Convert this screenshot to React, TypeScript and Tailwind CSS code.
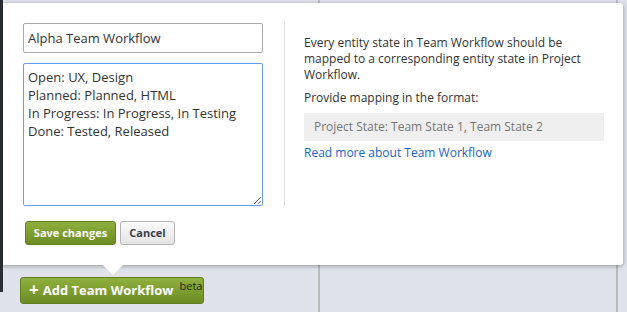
export default function App() {
  return (
    <div
      className="relative w-[627px] h-[312px] overflow-hidden bg-[#dfe2ea] flex"
      style={{ fontFamily: '"Open Sans", "Liberation Sans", sans-serif' }}
    >
      {/* board columns behind the popover */}
      <div className="w-[3px] h-[292px] bg-[#2b2e35]" />
      <div className="w-[315px] h-full flex flex-col justify-end pl-[17px] pb-[8px]">
        <button className="w-[184px] h-[27px] flex items-center whitespace-nowrap pl-[8px] rounded-[3px] border border-[#5f7e1f] bg-gradient-to-b from-[#8fb03d] to-[#6d8c25] text-white font-bold text-[13px] leading-none">
          <span className="text-[17px] mr-[4px] -mt-[2px]">+</span>
          <span>Add Team Workflow</span>
          <span className="ml-[6px] -mt-[10px] text-[11px] font-normal text-[#1f2a0a]">beta</span>
        </button>
      </div>
      <div className="w-[2px] h-full bg-[#b9babd]" />
      <div className="w-[296px] h-full" />
      <div className="w-[2px] h-full bg-[#b9babd]" />

      {/* popover */}
      <div className="absolute left-[3px] top-[3px] w-[620px] h-[262px] bg-white rounded-tr-[3px] rounded-br-[3px] shadow-[0_1px_4px_rgba(0,0,0,0.35)] flex pt-[20px] pl-[20px]">
        <div className="w-[240px] flex flex-col">
          <input
            defaultValue="Alpha Team Workflow"
            className="h-[30px] w-full border border-[#a9a9a9] rounded-[2px] px-[4px] text-[13px] text-[#333] outline-none"
          />
          <textarea
            defaultValue={"Open: UX, Design\nPlanned: Planned, HTML\nIn Progress: In Progress, In Testing\nDone: Tested, Released"}
            className="mt-[10px] h-[143px] w-full border border-[#6a9cf0] rounded-[2px] px-[4px] py-[4px] text-[13px] leading-[18px] text-[#333] outline-none resize-y"
          />
          <div className="flex gap-[4px] mt-[15px] pl-[2px]">
            <button className="w-[91px] h-[24px] rounded-[3px] border border-[#5f7e1f] bg-gradient-to-b from-[#8fb03d] to-[#6d8c25] text-white font-bold text-[11px]">
              Save changes
            </button>
            <button className="w-[55px] h-[24px] rounded-[3px] border border-[#b5b5b5] bg-gradient-to-b from-[#fbfbfb] to-[#e4e4e4] text-[#3a3f4a] font-bold text-[11px]">
              Cancel
            </button>
          </div>
        </div>
        <div className="ml-[21px] w-px h-[184px] -mt-[1px] bg-[#dcdcdc]" />
        <div className="ml-[19px] w-[300px] pt-[12px] text-[12px] leading-[16px] text-[#333]">
          <p>Every entity state in Team Workflow should be mapped to a corresponding entity state in Project Workflow.</p>
          <p className="mt-[7px]">Provide mapping in the format:</p>
          <div className="mt-[7px] h-[28px] bg-[#efefef] flex items-center pl-[10px] text-[#777]">
            Project State: Team State 1, Team State 2
          </div>
          <a href="#" className="block mt-[4px] text-[#1b63c6]">
            Read more about Team Workflow
          </a>
        </div>

        {/* arrow */}
        <div className="absolute left-[100px] top-[262px] w-0 h-0 border-l-[10px] border-r-[10px] border-t-[10px] border-l-transparent border-r-transparent border-t-white" />
      </div>
    </div>
  );
}
